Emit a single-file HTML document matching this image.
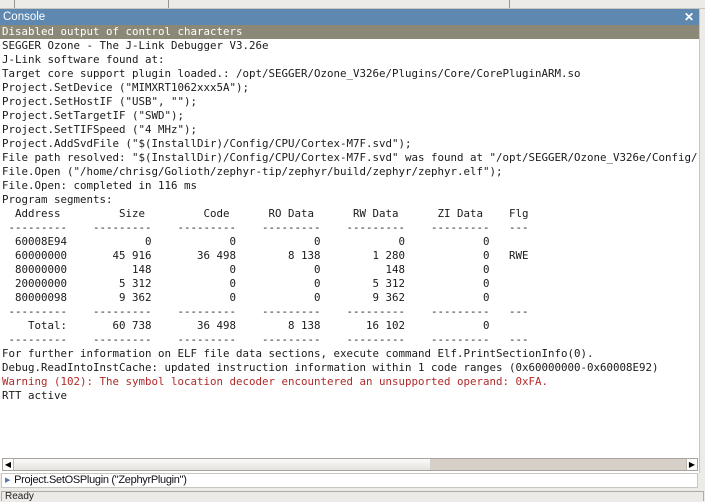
<!DOCTYPE html>
<html><head><style>
html,body{margin:0;padding:0;width:705px;height:499px;overflow:hidden;background:#edebe8;font-family:"Liberation Sans",sans-serif;}
.top{position:absolute;left:0;top:0;width:705px;height:8px;background:#edebe8;border-bottom:1px solid #c9c6c0;}
.top i{position:absolute;top:0;height:8px;border-left:1px solid #9a968f;}
.panel{position:absolute;left:0;top:9px;width:699px;height:464px;background:#fff;border-right:1px solid #c9c6c0;}
.title{height:16px;background:#5f88b1;color:#fff;font-size:11.5px;line-height:16px;padding-left:3px;position:relative;}
.title b{position:absolute;right:5px;top:0;font-weight:bold;font-size:12px;}
.c{font-family:"DejaVu Sans Mono",monospace;font-size:10.8px;color:#1a1a1a;}
.c div{height:14px;line-height:14px;white-space:pre;padding-left:2px;overflow:visible;}
.c div.hl{background:#8c8878;color:#fff;}
.c div.w{color:#b02a2a;}
.hs{position:absolute;left:2px;top:458px;width:696px;height:13px;background:#fff;border:1px solid #a9a59e;box-sizing:border-box;}
.hs .thumb{position:absolute;left:11px;top:0;width:416px;height:11px;background:linear-gradient(#fafaf9,#e6e3de);border-right:1px solid #bdb9b2;}
.hs .trk{position:absolute;left:427px;top:0;right:11px;height:11px;background:#d6d0c8;}
.hs .l,.hs .r{position:absolute;top:0;width:10px;height:11px;font-size:8px;line-height:11px;text-align:center;color:#000;}
.hs .l{left:0;border-right:1px solid #bdb9b2}.hs .r{right:0;border-left:1px solid #bdb9b2}
.inp{position:absolute;left:1px;top:473px;width:697px;height:15px;background:#fff;border:1px solid #c9c6c0;box-sizing:border-box;font-size:11px;line-height:13px;color:#111;letter-spacing:-0.3px;}
.inp span{color:#5577aa;font-size:7px;padding:0 4px 0 3px;vertical-align:1px;}
.st{position:absolute;left:1px;top:491px;width:703px;height:10px;border:1px solid #b0aca5;border-bottom:none;box-sizing:border-box;font-size:10px;line-height:10px;padding-left:3px;color:#222;}
</style></head><body>
<div class="top"><i style="left:14px"></i><i style="left:168px"></i><i style="left:509px"></i></div>
<div class="panel">
<div class="title">Console<b>✕</b></div>
<div class="c">
<div class="hl">Disabled output of control characters</div>
<div>SEGGER Ozone - The J-Link Debugger V3.26e</div>
<div>J-Link software found at:</div>
<div>Target core support plugin loaded.: /opt/SEGGER/Ozone_V326e/Plugins/Core/CorePluginARM.so</div>
<div>Project.SetDevice ("MIMXRT1062xxx5A");</div>
<div>Project.SetHostIF ("USB", "");</div>
<div>Project.SetTargetIF ("SWD");</div>
<div>Project.SetTIFSpeed ("4 MHz");</div>
<div>Project.AddSvdFile ("$(InstallDir)/Config/CPU/Cortex-M7F.svd");</div>
<div>File path resolved: "$(InstallDir)/Config/CPU/Cortex-M7F.svd" was found at "/opt/SEGGER/Ozone_V326e/Config/</div>
<div>File.Open ("/home/chrisg/Golioth/zephyr-tip/zephyr/build/zephyr/zephyr.elf");</div>
<div>File.Open: completed in 116 ms</div>
<div>Program segments:</div>
<div>  Address         Size         Code      RO Data      RW Data      ZI Data    Flg</div>
<div> ---------    ---------    ---------    ---------    ---------    ---------   ---</div>
<div>  60008E94            0            0            0            0            0</div>
<div>  60000000       45 916       36 498        8 138        1 280            0   RWE</div>
<div>  80000000          148            0            0          148            0</div>
<div>  20000000        5 312            0            0        5 312            0</div>
<div>  80000098        9 362            0            0        9 362            0</div>
<div> ---------    ---------    ---------    ---------    ---------    ---------   ---</div>
<div>    Total:       60 738       36 498        8 138       16 102            0</div>
<div> ---------    ---------    ---------    ---------    ---------    ---------   ---</div>
<div>For further information on ELF file data sections, execute command Elf.PrintSectionInfo(0).</div>
<div>Debug.ReadIntoInstCache: updated instruction information within 1 code ranges (0x60000000-0x60008E92)</div>
<div class="w">Warning (102): The symbol location decoder encountered an unsupported operand: 0xFA.</div>
<div>RTT active</div>
</div>
</div>
<div class="hs"><div class="l">◀</div><div class="thumb"></div><div class="trk"></div><div class="r">▶</div></div>
<div class="inp"><span>▶</span>Project.SetOSPlugin ("ZephyrPlugin")</div>
<div class="st">Ready</div>
</body></html>
